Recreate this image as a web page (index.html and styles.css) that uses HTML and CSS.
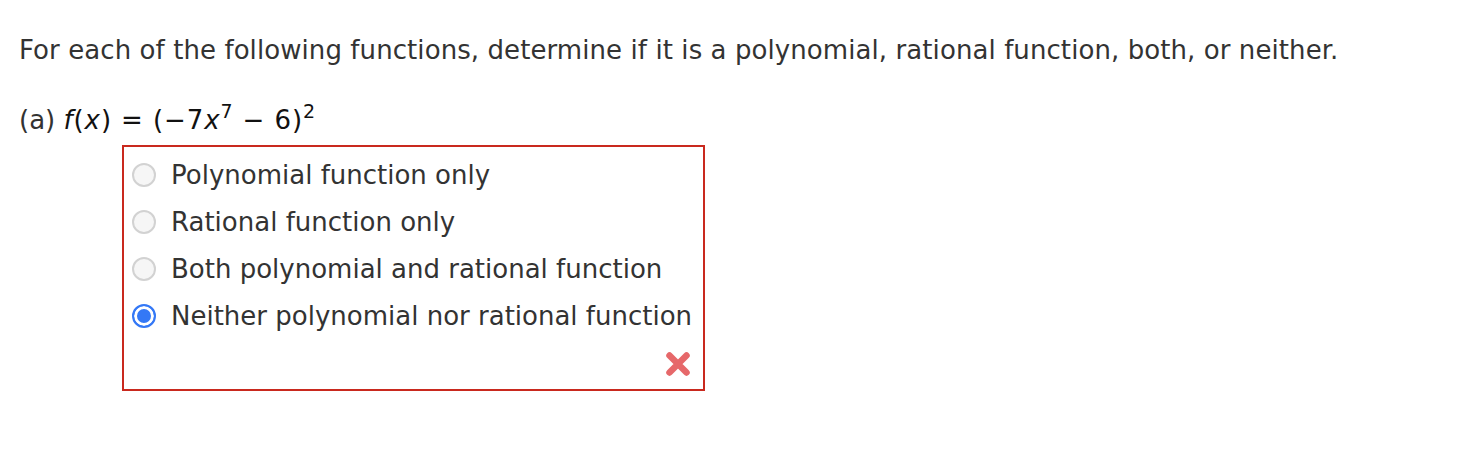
FILE: index.html
```html
<!DOCTYPE html>
<html lang="en">
<head>
    <meta charset="UTF-8">
    <title>Question</title>
    <link rel="stylesheet" href="styles.css">
</head>
<body>
    <p class="prompt">For each of the following functions, determine if it is a polynomial, rational function, both, or neither.</p>
    <p class="part">(a) <span class="math"><i>f</i>(<i>x</i>) = (&minus;7<i>x</i><sup>7</sup> &minus; 6)<sup>2</sup></span></p>
    <div class="answer">
        <label class="choice"><span class="radio"></span>Polynomial function only</label>
        <label class="choice"><span class="radio"></span>Rational function only</label>
        <label class="choice"><span class="radio"></span>Both polynomial and rational function</label>
        <label class="choice"><span class="radio on"></span>Neither polynomial nor rational function</label>
        <div class="mark">
            <svg width="26" height="26" viewBox="0 0 26 26">
                <path d="M4.5 4.5 L21.5 21.5 M21.5 4.5 L4.5 21.5" stroke="#e4585a" stroke-width="6.5" stroke-linecap="round" opacity="0.9"/>
            </svg>
        </div>
    </div>
</body>
</html>
```

FILE: styles.css
```css
body {
    margin: 0;
    padding: 31px 19px;
    font-family: "DejaVu Sans", Verdana, sans-serif;
    font-size: 26px;
    color: #333;
    background-color: white;
}

p {
    margin: 0;
}

.prompt {
    line-height: 38px;
    letter-spacing: 0.08px;
}

.part {
    margin-top: 32px;
    line-height: 38px;
}

.math {
    color: #111;
    letter-spacing: 0.9px;
}

.math sup {
    font-size: 19px;
    vertical-align: 11px;
    line-height: 0;
}

.answer {
    box-sizing: border-box;
    width: 583px;
    margin: 6px 0 0 103px;
    border: 2px solid #c9291e;
    padding: 4px 0 0 8px;
}

.choice {
    display: flex;
    align-items: center;
    gap: 15px;
    height: 47px;
}

.radio {
    width: 24px;
    height: 24px;
    border: 2px solid #d2d2d2;
    border-radius: 50%;
    background-color: #f6f6f6;
    box-sizing: border-box;
}

.radio.on {
    border: 2px solid #3478f6;
    background-color: #3478f6;
    box-shadow: inset 0 0 0 3px white;
}

.mark {
    display: flex;
    justify-content: flex-end;
    padding: 12px 12px 12px 0;
}
```
